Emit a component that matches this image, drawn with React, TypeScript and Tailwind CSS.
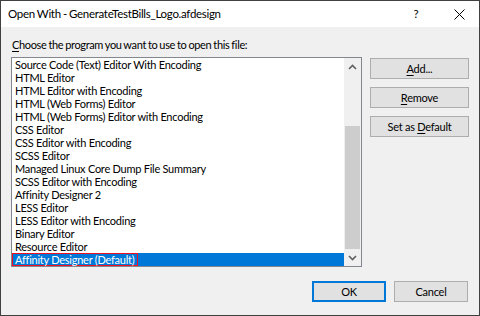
import React from "react";

const items = [
  "Source Code (Text) Editor With Encoding",
  "HTML Editor",
  "HTML Editor with Encoding",
  "HTML (Web Forms) Editor",
  "HTML (Web Forms) Editor with Encoding",
  "CSS Editor",
  "CSS Editor with Encoding",
  "SCSS Editor",
  "Managed Linux Core Dump File Summary",
  "SCSS Editor with Encoding",
  "Affinity Designer 2",
  "LESS Editor",
  "LESS Editor with Encoding",
  "Binary Editor",
  "Resource Editor",
  "Affinity Designer (Default)",
];

function SideButton({ pre, u, post }: { pre: string; u: string; post: string }) {
  return (
    <button className="h-[21px] w-[99px] border border-[#adadad] bg-[#e1e1e1] leading-none text-black">
      {pre}
      <span className="underline underline-offset-2">{u}</span>
      {post}
    </button>
  );
}

export default function App() {
  return (
    <div
      className="w-[480px] h-[316px] flex flex-col border border-[#404040] bg-[#f0f0f0] text-black text-[11px] tracking-[-0.25px] select-none"
      style={{ fontFamily: 'Lato, "Noto Sans", sans-serif' }}
    >
      {/* Title bar */}
      <div className="h-[26px] bg-white flex items-center pl-[7px] text-[11.5px] tracking-[-0.3px] [word-spacing:-0.5px]">
        <div className="flex-1 truncate">Open With - GenerateTestBills_Logo.afdesign</div>
        <div className="w-[46px] text-center">?</div>
        <div className="w-[40px] flex justify-center">
          <svg width="11" height="11" viewBox="0 0 11 11">
            <path d="M0.5 0.5 L10.5 10.5 M10.5 0.5 L0.5 10.5" stroke="#000" strokeWidth="1" />
          </svg>
        </div>
      </div>

      <div className="flex-1 flex flex-col px-[10px]">
        <div className="mt-[10px] h-[15px] leading-[15px] pl-[1px] tracking-[-0.35px] [word-spacing:-0.5px]">
          <span className="underline underline-offset-2">C</span>hoose the program you want to use to open this file:
        </div>

        <div className="mt-[5px] flex gap-[8px]">
          {/* List box */}
          <div className="w-[352px] h-[210px] border border-[#828790] bg-white flex">
            <div className="flex-1 overflow-hidden">
              {items.slice(0, -1).map((t) => (
                <div key={t} className="h-[13px] leading-[13px] pl-[3px] whitespace-nowrap">
                  {t}
                </div>
              ))}
              <div className="h-[13px] bg-[#0078d7] text-white">
                <div className="inline-block h-[13px] border border-solid border-[#e81123] pl-[2px] pr-[3px] leading-[11px] whitespace-nowrap align-top">
                  Affinity Designer (Default)
                </div>
              </div>
            </div>
            {/* Scrollbar */}
            <div className="w-[17px] bg-[#f0f0f0] flex flex-col">
              <div className="h-[17px] flex items-center justify-center">
                <svg width="9" height="6" viewBox="0 0 9 6">
                  <path d="M1 5 L4.5 1.5 L8 5" stroke="#606060" strokeWidth="1.6" fill="none" />
                </svg>
              </div>
              <div className="h-[51px]" />
              <div className="h-[123px] mx-[1px] bg-[#cdcdcd]" />
              <div className="flex-1" />
              <div className="h-[17px] flex items-center justify-center">
                <svg width="9" height="6" viewBox="0 0 9 6">
                  <path d="M1 1 L4.5 4.5 L8 1" stroke="#606060" strokeWidth="1.6" fill="none" />
                </svg>
              </div>
            </div>
          </div>

          {/* Side buttons */}
          <div className="flex flex-col gap-[8px] pt-[1px]">
            <SideButton pre="" u="A" post="dd..." />
            <SideButton pre="" u="R" post="emove" />
            <SideButton pre="Set as " u="D" post="efault" />
          </div>
        </div>

        <div className="mt-[14px] flex justify-end gap-[8px] pr-[1px]">
          <button className="h-[21px] w-[74px] border-2 border-[#0078d7] bg-[#e1e1e1] leading-none">
            OK
          </button>
          <button className="h-[21px] w-[74px] border border-[#adadad] bg-[#e1e1e1] leading-none">
            Cancel
          </button>
        </div>
      </div>
    </div>
  );
}
